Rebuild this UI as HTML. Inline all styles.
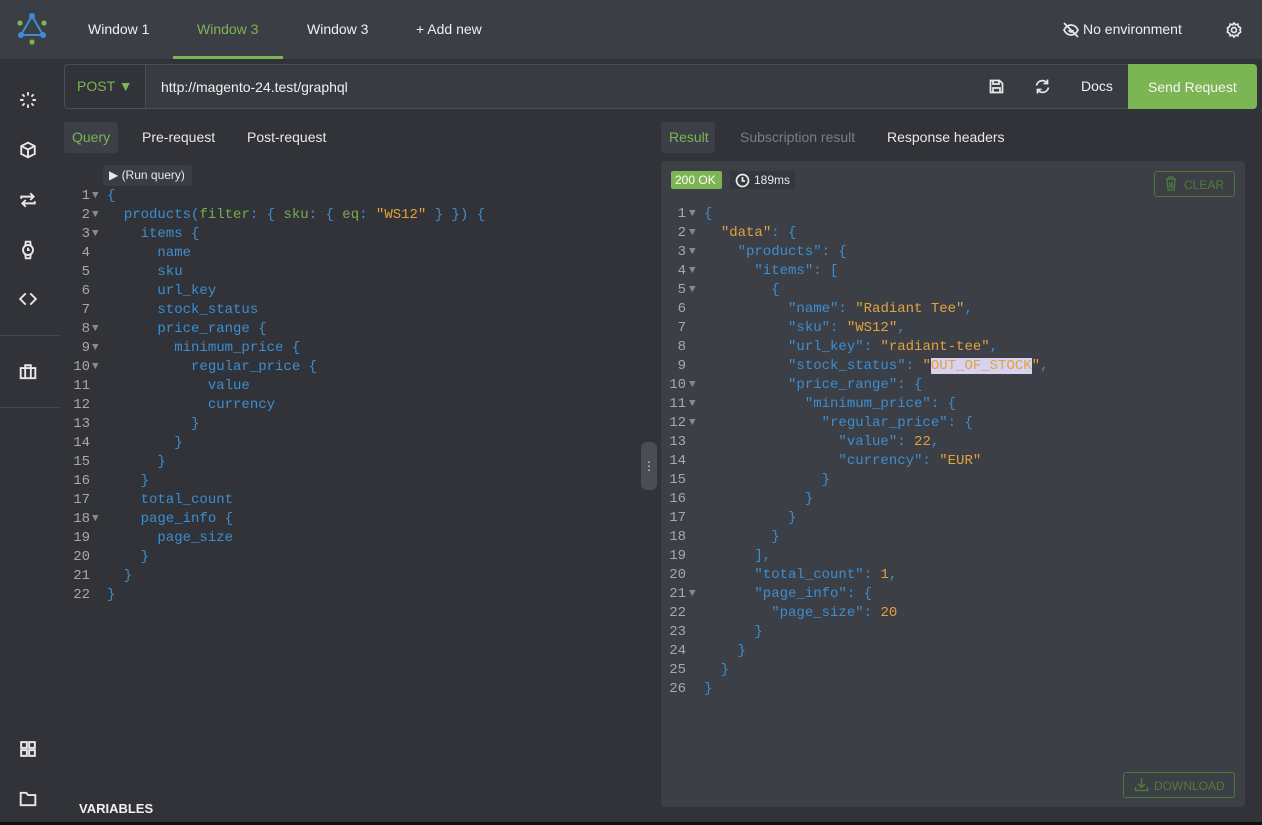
<!DOCTYPE html>
<html><head><meta charset="utf-8"><style>
*{margin:0;padding:0;box-sizing:border-box}
body{width:1262px;height:825px;background:#313338;font-family:"Liberation Sans",sans-serif;color:#e8e8e8;position:relative;overflow:hidden}
.a{position:absolute}
.hdr{left:0;top:0;width:1262px;height:59px;background:#3b3e45}
.tab{top:21px;font-size:14px;color:#f0f0f0}
.code{font-family:"Liberation Mono",monospace;font-size:14px;line-height:19px;white-space:pre}
.ln{color:#a8a8a8;text-align:right;width:26px}
.ar{color:#8a8a8a;font-size:11px}
.b{color:#3c8ed0}.g{color:#7cab50}.o{color:#e3a33c}.p{color:#3c8ed0}
.ic{stroke:#e8e8e8;fill:none;stroke-width:1.7}
</style></head><body>
<div class="a hdr"></div>
<svg class="a" style="left:14px;top:11px" width="36" height="36" viewBox="0 0 36 36">
<polygon points="18,5 7,24 29,24" fill="none" stroke="#3c8ed0" stroke-width="2"/>
<circle cx="18" cy="5" r="3" fill="#3c8ed0"/><circle cx="7" cy="24" r="3" fill="#3c8ed0"/><circle cx="29" cy="24" r="3" fill="#3c8ed0"/>
<circle cx="6" cy="12" r="2.6" fill="#7cb553"/><circle cx="30" cy="12" r="2.6" fill="#7cb553"/><circle cx="18" cy="31" r="2.6" fill="#7cb553"/>
</svg>
<div class="a tab" style="left:88px">Window 1</div>
<div class="a tab" style="left:197px;color:#7cb553">Window 3</div>
<div class="a" style="left:173px;top:56px;width:110px;height:3px;background:#7cb553"></div>
<div class="a tab" style="left:307px">Window 3</div>
<div class="a tab" style="left:416px">+ Add new</div>
<svg class="a" style="left:1062px;top:21px" width="18" height="18" viewBox="0 0 18 18"><path class="ic" d="M2 9c2-4 5-5 7-5s5 1 7 5c-2 4-5 5-7 5s-5-1-7-5z M7 9a2 2 0 0 0 4 0 M2 2l14 14" stroke-width="1.4"/></svg>
<div class="a tab" style="left:1083px">No environment</div>
<svg class="a" style="left:1225px;top:21px" width="18" height="18" viewBox="0 0 18 18"><circle cx="9" cy="9" r="2.5" class="ic" stroke-width="1.4"/><path class="ic" stroke-width="1.4" d="M9 2l1.5 1.8 2.3-.6.6 2.3L15.6 7 15 9l.6 2-2.2 1.5-.6 2.3-2.3-.6L9 16l-1.5-1.8-2.3.6-.6-2.3L2.4 11 3 9l-.6-2 2.2-1.5.6-2.3 2.3.6z"/></svg>
<!-- sidebar -->
<div class="a" style="left:0;top:335px;width:60px;height:1px;background:#44474e"></div>
<div class="a" style="left:0;top:407px;width:60px;height:1px;background:#44474e"></div>
<svg class="a" style="left:19px;top:91px" width="18" height="18" viewBox="0 0 16 16"><path class="ic" stroke-width="1.6" d="M8 1v3M8 12v3M1 8h3M12 8h3M3 3l2 2M11 11l2 2M3 13l2-2M11 5l2-2"/></svg>
<svg class="a" style="left:19px;top:141px" width="18" height="18" viewBox="0 0 16 16"><path class="ic" d="M8 1.5l6 3v7l-6 3-6-3v-7z M2 4.5l6 3 6-3 M8 7.5v7"/></svg>
<svg class="a" style="left:19px;top:191px" width="18" height="18" viewBox="0 0 16 16"><path class="ic" d="M2 7V5h11M10 2l3 3-3 3M14 9v2H3M6 14l-3-3 3-3"/></svg>
<svg class="a" style="left:19px;top:240px" width="18" height="20" viewBox="0 0 16 18"><circle cx="8" cy="9" r="4.5" class="ic"/><path class="ic" d="M5.5 5l.5-3.5h4l.5 3.5M5.5 13l.5 3.5h4l.5-3.5M8 7v2h1.5"/></svg>
<svg class="a" style="left:19px;top:290px" width="18" height="18" viewBox="0 0 16 16"><path class="ic" d="M6 3L1 8l5 5M10 3l5 5-5 5"/></svg>
<svg class="a" style="left:19px;top:363px" width="18" height="18" viewBox="0 0 16 16"><path class="ic" d="M1.5 4.5h13v9h-13z M5.5 4.5V2h5v2.5 M5.5 4.5v9M10.5 4.5v9"/></svg>
<svg class="a" style="left:20px;top:741px" width="16" height="16" viewBox="0 0 14 14"><path class="ic" d="M1 1h5v5H1zM8 1h5v5H8zM1 8h5v5H1zM8 8h5v5H8z" stroke-width="1.5"/></svg>
<svg class="a" style="left:19px;top:790px" width="18" height="18" viewBox="0 0 16 16"><path class="ic" d="M1.5 2.5h5l1.5 2h6.5v9h-13z"/></svg>
<div class="a" style="left:79px;top:801px;font-size:13px;font-weight:bold;color:#f0f0f0">VARIABLES</div>
<div class="a" style="left:0;top:822px;width:1262px;height:3px;background:#111"></div>
<!-- url bar -->
<div class="a" style="left:64px;top:64px;width:1192px;height:45px;border:1px solid #4a4d55;border-radius:4px;background:#383b41"></div>
<div class="a" style="left:64px;top:64px;width:82px;height:45px;border:1px solid #4a4d55;border-radius:4px 0 0 4px;background:#313338"></div>
<div class="a" style="left:77px;top:78px;font-size:14px;color:#7cb553">POST ▼</div>
<div class="a" style="left:161px;top:79px;font-size:14px;color:#f0f0f0">http://magento-24.test/graphql</div>
<svg class="a" style="left:989px;top:79px" width="15" height="15" viewBox="0 0 15 15"><path class="ic" stroke-width="1.4" d="M1.5 1.5h9l3 3v9h-12z M4 1.5v3.5h6V1.5 M4 13.5v-4.5h7v4.5"/></svg>
<svg class="a" style="left:1034px;top:78px" width="17" height="17" viewBox="0 0 17 17"><path class="ic" stroke-width="1.5" d="M2.5 7.5a6 6 0 0 1 11-2 M14.5 9.5a6 6 0 0 1-11 2 M13.5 1.5v4h-4 M3.5 15.5v-4h4"/></svg>
<div class="a" style="left:1081px;top:78px;font-size:14px;color:#f0f0f0">Docs</div>
<div class="a" style="left:1128px;top:64px;width:129px;height:45px;background:#7cb553;border-radius:0 4px 4px 0"></div>
<div class="a" style="left:1148px;top:79px;font-size:14px;color:#f5f5f5">Send Request</div>
<!-- query tabs -->
<div class="a" style="left:64px;top:122px;width:54px;height:31px;background:#3c3f46;border-radius:3px"></div>
<div class="a" style="left:72px;top:129px;font-size:14px;color:#7cb553">Query</div>
<div class="a" style="left:142px;top:129px;font-size:14px">Pre-request</div>
<div class="a" style="left:247px;top:129px;font-size:14px">Post-request</div>
<div class="a" style="left:103px;top:165px;width:89px;height:21px;background:#3a3d44;border-radius:3px;font-size:12px;padding:3px 0 0 6px">▶ (Run query)</div>
<div class="a code ln" style="left:64px;top:187px">1
2
3
4
5
6
7
8
9
10
11
12
13
14
15
16
17
18
19
20
21
22</div>
<div class="a code ar" style="left:92px;top:187px;line-height:19px">▼
▼
▼




▼
▼
▼







▼</div>
<div class="a code" style="left:107px;top:187px"><span class="p">{</span>
  <span class="b">products(</span><span class="g">filter</span><span class="p">: { </span><span class="g">sku</span><span class="p">: { </span><span class="g">eq</span><span class="p">: </span><span class="o">"WS12"</span><span class="p"> } }) {</span>
<span class="b">    items {
      name
      sku
      url_key
      stock_status
      price_range {
        minimum_price {
          regular_price {
            value
            currency
          }
        }
      }
    }
    total_count
    page_info {
      page_size
    }
  }
}</span></div>
<!-- divider handle -->
<div class="a" style="left:641px;top:442px;width:16px;height:48px;background:#4a4d55;border-radius:6px;color:#ddd;font-size:12px;text-align:center;line-height:48px">⋮</div>
<!-- result tabs -->
<div class="a" style="left:661px;top:122px;width:54px;height:31px;background:#3c3f46;border-radius:3px"></div>
<div class="a" style="left:669px;top:129px;font-size:14px;color:#7cb553">Result</div>
<div class="a" style="left:740px;top:129px;font-size:14px;color:#7a7d84">Subscription result</div>
<div class="a" style="left:887px;top:129px;font-size:14px">Response headers</div>
<div class="a" style="left:661px;top:161px;width:584px;height:646px;background:#3c3f46;border-radius:4px"></div>
<div class="a" style="left:671px;top:171px;width:51px;height:18px;background:#7cb553;border-radius:2px;font-size:12px;color:#fff;padding:2px 0 0 4px">200 OK</div>
<div class="a" style="left:730px;top:171px;width:65px;height:18px;background:#34373d;border-radius:2px;font-size:12px;padding:2px 0 0 24px">189ms</div>
<svg class="a" style="left:735px;top:173px" width="15" height="15" viewBox="0 0 15 15"><circle cx="7.5" cy="7.5" r="6" class="ic" stroke-width="1.4"/><path class="ic" stroke-width="1.4" d="M7.5 4v4h2.5"/></svg>
<div class="a" style="left:1154px;top:171px;width:81px;height:26px;border:1px solid #4c7a35;border-radius:3px;font-size:12px;color:#4f7d38;padding:6px 0 0 29px">CLEAR</div>
<svg class="a" style="left:1165px;top:176px" width="12" height="15" viewBox="0 0 12 15"><path d="M1 3h10M4 3V1h4v2M2 3l1 11h6l1-11M5 6v6M7 6v6" fill="none" stroke="#4f7d38" stroke-width="1.3"/></svg>
<div class="a" style="left:1123px;top:772px;width:112px;height:26px;border:1px solid #4c7a35;border-radius:3px;font-size:12px;color:#4f7d38;padding:6px 0 0 30px">DOWNLOAD</div>
<svg class="a" style="left:1134px;top:777px" width="15" height="15" viewBox="0 0 15 15"><path d="M7.5 1v9M4 7l3.5 3.5L11 7M1.5 10v3.5h12V10" fill="none" stroke="#4f7d38" stroke-width="1.5"/></svg>
<div class="a code ln" style="left:660px;top:205px">1
2
3
4
5
6
7
8
9
10
11
12
13
14
15
16
17
18
19
20
21
22
23
24
25
26</div>
<div class="a code ar" style="left:689px;top:205px;line-height:19px">▼
▼
▼
▼
▼




▼
▼
▼








▼</div>
<div class="a code" style="left:704px;top:205px"><span class="p">{
  </span><span class="o">"data"</span><span class="p">: {
    "products": {
      "items": [
        {
          "name": </span><span class="o">"Radiant Tee"</span><span class="p">,
          "sku": </span><span class="o">"WS12"</span><span class="p">,
          "url_key": </span><span class="o">"radiant-tee"</span><span class="p">,
          "stock_status": </span><span class="o">"<span style="background:#d6d2f0">OUT_OF_STOCK</span>"</span><span class="p">,
          "price_range": {
            "minimum_price": {
              "regular_price": {
                "value": </span><span class="o">22</span><span class="p">,
                "currency": </span><span class="o">"EUR"</span><span class="p">
              }
            }
          }
        }
      ],
      "total_count": </span><span class="o">1</span><span class="p">,
      "page_info": {
        "page_size": </span><span class="o">20</span><span class="p">
      }
    }
  }
}</span></div>
</body></html>
